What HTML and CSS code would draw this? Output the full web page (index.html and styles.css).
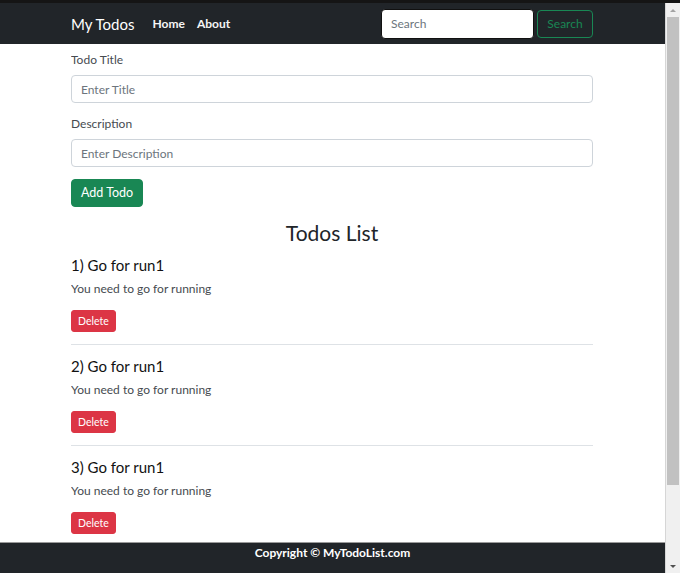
FILE: index.html
```html
<!DOCTYPE html>
<html lang="en">
  <head>
    <meta charset="UTF-8" />
    <meta name="viewport" content="width=device-width, initial-scale=1.0" />
    <title>My Todos</title>
    <link rel="stylesheet" href="styles.css">
  </head>
  <body>
    <div class="topbar"></div>
    <div class="frame">
      <div class="page">
        <nav class="navbar">
          <div class="container nav-inner">
            <a class="brand" href="#">My Todos</a>
            <ul class="nav-links">
              <li><a href="#">Home</a></li>
              <li><a href="#">About</a></li>
            </ul>
            <form class="search">
              <input type="search" placeholder="Search" />
              <button type="submit">Search</button>
            </form>
          </div>
        </nav>
        <main class="container content">
          <form class="todo-form">
            <div class="field">
              <label for="title">Todo Title</label>
              <input type="text" id="title" placeholder="Enter Title" />
            </div>
            <div class="field">
              <label for="desc">Description</label>
              <input type="text" id="desc" placeholder="Enter Description" />
            </div>
            <button type="submit" class="btn-add">Add Todo</button>
          </form>
          <h2 class="list-title">Todos List</h2>
          <div class="todo">
            <h5>1) Go for run1</h5>
            <p>You need to go for running</p>
            <button class="btn-delete">Delete</button>
          </div>
          <hr />
          <div class="todo">
            <h5>2) Go for run1</h5>
            <p>You need to go for running</p>
            <button class="btn-delete">Delete</button>
          </div>
          <hr />
          <div class="todo">
            <h5>3) Go for run1</h5>
            <p>You need to go for running</p>
            <button class="btn-delete">Delete</button>
          </div>
          <hr />
        </main>
        <footer class="footer">
          <p>Copyright &copy; MyTodoList.com</p>
        </footer>
      </div>
      <div class="scrollbar">
        <span class="arrow up"></span>
        <div class="track"><div class="thumb"></div></div>
        <span class="arrow down"></span>
      </div>
    </div>
  </body>
</html>
```

FILE: styles.css
```css
* {
  box-sizing: border-box;
}
html,
body {
  margin: 0;
  height: 100%;
}
body {
  display: flex;
  flex-direction: column;
  overflow: hidden;
  font-family: 'Lato', 'Open Sans', sans-serif;
  font-size: 12px;
  line-height: 18px;
  color: #212529;
  background: #fff;
}
.topbar {
  height: 3px;
  background: #151515;
}
.frame {
  display: flex;
  flex: 1;
  min-height: 0;
}
.page {
  display: flex;
  flex: 1;
  flex-direction: column;
  min-width: 0;
}
.container {
  width: 523px;
  margin: 0 auto;
  padding-right: 1px;
}
/* navbar */
.navbar {
  height: 41px;
  background: #212529;
}
.nav-inner {
  display: flex;
  height: 100%;
  align-items: center;
}
.brand {
  margin-right: 12px;
  font-size: 15px;
  color: #fff;
  text-decoration: none;
}
.nav-links {
  display: flex;
  margin: 0;
  padding: 0;
  list-style: none;
}
.nav-links a {
  display: block;
  padding: 0 6px;
  color: #f5f5f5;
  font-weight: 700;
  text-decoration: none;
}
.search {
  display: flex;
  margin-left: auto;
  gap: 3px;
  align-items: center;
}
.search input {
  width: 153px;
  height: 30px;
  padding: 0 9px;
  font: inherit;
  border: 1px solid #111;
  border-radius: 4px;
  background: #fff;
}
.search button {
  width: 56px;
  height: 28px;
  font: inherit;
  color: #198754;
  background: transparent;
  border: 1px solid #198754;
  border-radius: 4px;
}
input::placeholder {
  color: #6c757d;
}
/* form */
.content {
  flex: 1;
  padding-top: 7px;
  overflow: hidden;
}
.field {
  margin-bottom: 12px;
}
.field label {
  display: block;
  margin-bottom: 6px;
  color: #464b50;
}
.field input {
  display: block;
  width: 100%;
  height: 28px;
  padding: 0 9px;
  font: inherit;
  color: #212529;
  border: 1px solid #ced4da;
  border-radius: 4px;
}
.btn-add {
  height: 28px;
  padding: 0 9px;
  font: inherit;
  font-size: 12.5px;
  color: #fff;
  background: #198754;
  border: 1px solid #198754;
  border-radius: 4px;
}
/* list */
.list-title {
  margin: 13px 0 11px;
  font-size: 21px;
  font-weight: 400;
  line-height: 25px;
  text-align: center;
}
.todo h5 {
  margin: 0 0 6px;
  font-size: 15px;
  font-weight: 400;
  line-height: 18px;
  color: #111;
}
.todo p {
  margin: 0 0 12px;
  color: #464b50;
}
.btn-delete {
  display: block;
  height: 22px;
  padding: 0 6px;
  font: inherit;
  font-size: 10.5px;
  color: #fff;
  background: #dc3545;
  border: 1px solid #dc3545;
  border-radius: 3px;
}
hr {
  margin: 12px 0;
  border: 0;
  border-top: 1px solid #dee2e6;
}
/* footer */
.footer {
  height: 31px;
  background: #212529;
  border-top: 1px solid #9a9a9a;
}
.footer p {
  margin: 1px 0 0;
  color: #fff;
  font-weight: 700;
  text-align: center;
}
/* fake scrollbar */
.scrollbar {
  display: flex;
  flex-direction: column;
  width: 15px;
  background: #f0f0f0;
  border-left: 1px solid #d6d6d6;
}
.arrow {
  display: flex;
  height: 14px;
  justify-content: center;
  align-items: center;
}
.arrow::before {
  content: '';
  border-left: 3px solid transparent;
  border-right: 3px solid transparent;
}
.arrow.up::before {
  border-bottom: 3px solid #a3a3a3;
}
.arrow.down::before {
  border-top: 3px solid #505050;
}
.track {
  flex: 1;
  padding: 0 1px;
}
.thumb {
  height: 468px;
  background: #c1c1c1;
}
```
